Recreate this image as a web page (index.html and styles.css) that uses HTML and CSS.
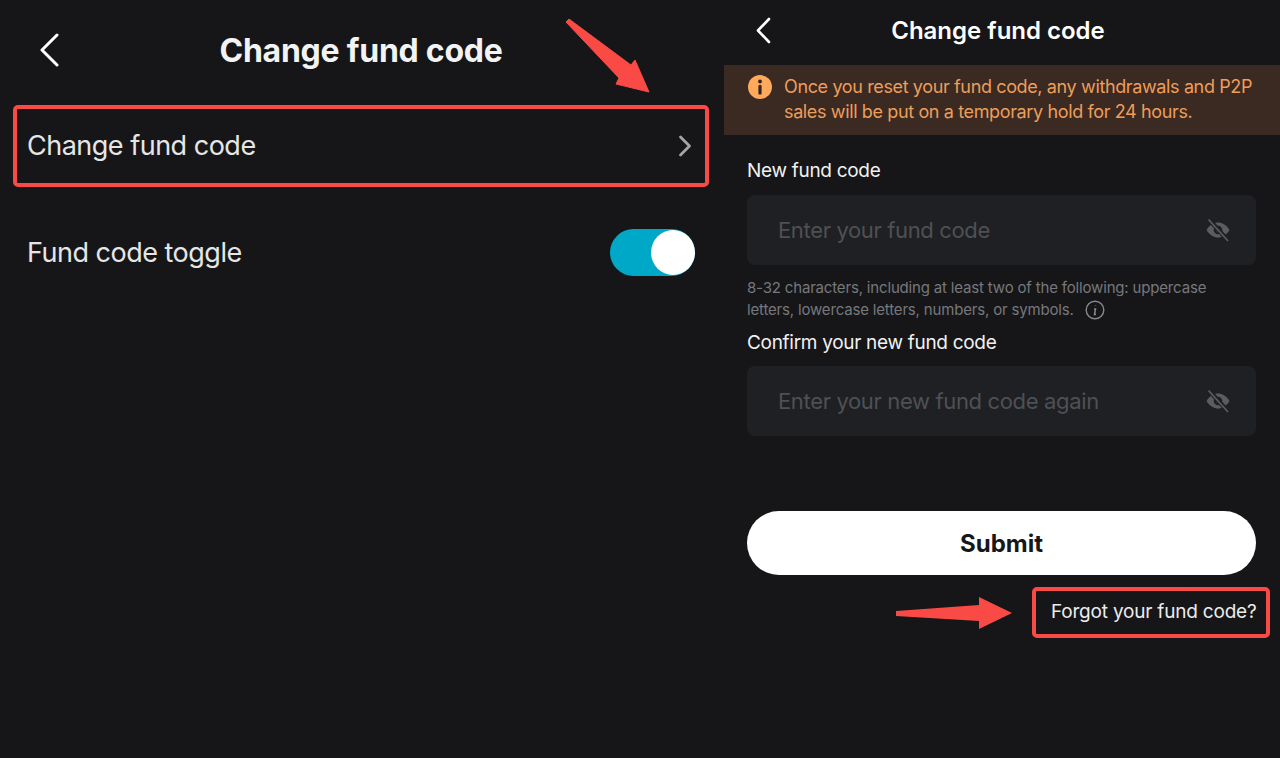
FILE: index.html
```html
<!DOCTYPE html>
<html lang="en">
<head>
  <meta charset="UTF-8"/>
  <meta name="viewport" content="width=device-width,initial-scale=1.0"/>
  <title>Change fund code</title>
  <link rel="stylesheet" href="styles.css">
</head>
<body>
  <!-- Left phone: settings list -->
  <section class="panel panel-left">
    <header class="top-left">
      <svg class="back-left" width="20" height="34" viewBox="0 0 20 34"><path d="M18 2 3 17l15 15" fill="none" stroke="#fff" stroke-width="3" stroke-linecap="round" stroke-linejoin="round"/></svg>
      <h1>Change fund code</h1>
    </header>

    <div class="row row-marked">
      <span>Change fund code</span>
      <svg width="14" height="22" viewBox="0 0 14 22"><path d="M2.500 2 11.500 11l-9 9" fill="none" stroke="#a3a4a6" stroke-width="2.800" stroke-linecap="round" stroke-linejoin="round"/></svg>
    </div>

    <div class="row row-toggle">
      <span>Fund code toggle</span>
      <div class="toggle"><div class="knob"></div></div>
    </div>

    <svg class="arrow arrow-one" width="100" height="90" viewBox="0 0 100 90"><path d="M6 12 9 9 71 55 75 50 89 82 56 74 59 68Z" fill="#f94a46" stroke="#f94a46" stroke-linejoin="round"/></svg>
  </section>

  <!-- Right phone: the form -->
  <section class="panel panel-right">
    <header class="top-right">
      <svg class="back-right" width="16" height="27" viewBox="0 0 16 27"><path d="M14 2 3 13.500 14 25" fill="none" stroke="#fff" stroke-width="2.600" stroke-linecap="round" stroke-linejoin="round"/></svg>
      <h2>Change fund code</h2>
    </header>

    <div class="notice">
      <svg class="notice-icon" width="24" height="24" viewBox="0 0 24 24"><circle cx="12" cy="12" r="12" fill="#ffa95c"/><rect x="10.400" y="10" width="3.200" height="9.500" rx="1" fill="#33261f"/><circle cx="12" cy="6.500" r="1.900" fill="#33261f"/></svg>
      <p>Once you reset your fund code, any withdrawals and P2P sales will be put on a temporary hold for 24 hours.</p>
    </div>

    <form class="form">
      <label class="label label-first">New fund code</label>
      <div class="field">
        <span>Enter your fund code</span>
        <svg class="eye" width="26" height="26" viewBox="0 0 26 26"><path d="M1.500 13C5 7.500 9 5.500 13 5.500S21 7.500 24.500 13C21 18.500 17 20.500 13 20.500S5 18.500 1.500 13Z" fill="#5b5c5f"/><circle cx="13" cy="13" r="4.300" fill="#1e2024"/><circle cx="13" cy="13" r="2" fill="#5b5c5f"/><path d="M4 2.500 23 23.500" stroke="#1e2024" stroke-width="4.500"/><path d="M3.500 2.500 23 24" stroke="#5b5c5f" stroke-width="1.800"/></svg>
      </div>
      <p class="hint">8-32 characters, including at least two of the following: uppercase letters, lowercase letters, numbers, or symbols.
        <svg class="hint-icon" width="20" height="20" viewBox="0 0 20 20"><circle cx="10" cy="10" r="8.800" fill="none" stroke="#88898b" stroke-width="1.400"/><path d="M10.500 5.500v.6M9 9h1.500l-1 5.500H11" fill="none" stroke="#88898b" stroke-width="1.500"/></svg>
      </p>
      <label class="label">Confirm your new fund code</label>
      <div class="field">
        <span>Enter your new fund code again</span>
        <svg class="eye" width="26" height="26" viewBox="0 0 26 26"><path d="M1.500 13C5 7.500 9 5.500 13 5.500S21 7.500 24.500 13C21 18.500 17 20.500 13 20.500S5 18.500 1.500 13Z" fill="#5b5c5f"/><circle cx="13" cy="13" r="4.300" fill="#1e2024"/><circle cx="13" cy="13" r="2" fill="#5b5c5f"/><path d="M4 2.500 23 23.500" stroke="#1e2024" stroke-width="4.500"/><path d="M3.500 2.500 23 24" stroke="#5b5c5f" stroke-width="1.800"/></svg>
      </div>
      <button class="submit" type="button">Submit</button>
      <div class="forgot-line">
        <a class="forgot">Forgot your fund code?</a>
      </div>
    </form>

    <svg class="arrow arrow-two" width="118" height="34" viewBox="0 0 118 34"><path d="M1 15 84 9 84 1 117 17 84 33 84 25 1 20Z" fill="#f94a46"/></svg>
  </section>
</body>
</html>
```

FILE: styles.css
```css
* { box-sizing:border-box; margin:0; padding:0; }
body {
  width:1280px; height:758px; overflow:hidden;
  display:flex;
  background:#161619; color:#fff;
  font-family:Inter,"Liberation Sans",sans-serif;
}
.panel { position:relative; height:100%; }
.panel-left { width:724px; }
.panel-right { width:556px; }

/* left */
.top-left {
  height:105px; padding:0 2px 5px 0;
  display:flex; align-items:center; justify-content:center;
  position:relative;
}
.top-left h1 { font-size:32px; font-weight:700; letter-spacing:-.25px; color:#f3f3f3; }
.back-left { position:absolute; left:39px; top:33px; }
.row {
  display:flex; align-items:center; justify-content:space-between;
  font-size:27px; letter-spacing:-.5px; color:#e6e6e6;
}
.row-marked {
  height:82px; margin:0 15px 0 13px; padding:0 13px 2px 10px;
  border:4px solid #f94a46; border-radius:5px;
}
.row-marked svg { margin-top:2px; }
.row-toggle { margin-top:42px; padding:0 29px 0 27px; }
.toggle {
  width:85px; height:47px; border-radius:24px; background:#00a8c8;
  display:flex; justify-content:flex-end; align-items:center;
}
.knob { width:44px; height:45px; border-radius:50%; background:#fff; }
.arrow { position:absolute; }
.arrow-one { left:560px; top:10px; }

/* right */
.top-right {
  height:65px; padding-bottom:4px;
  display:flex; align-items:center; justify-content:center;
  position:relative;
}
.top-right h2 { font-size:24px; font-weight:600; margin-left:-8px; }
.back-right { position:absolute; left:31px; top:17px; }
.notice {
  height:70px; padding:9px 20px 0 24px;
  display:flex; gap:12px;
  background:#3a2a22; color:#ee9d5a;
  font-size:18px; line-height:25px; letter-spacing:-.37px;
}
.notice-icon { flex:none; margin-top:1px; }
.form { padding:0 24px 0 23px; display:flex; flex-direction:column; }
.label { font-size:19px; line-height:24px; letter-spacing:-.3px; color:#f1f1f1; margin-top:10px; }
.label-first { margin-top:24px; margin-bottom:1px; }
.field {
  height:70px; margin-top:11px; padding:0 25px 0 31px;
  display:flex; align-items:center; justify-content:space-between;
  background:#1e2024; border-radius:8px;
  font-size:22px; letter-spacing:-.35px; color:#4f5053;
}
.hint { margin-top:12px; font-size:15px; line-height:22px; letter-spacing:-.17px; color:#77787b; }
.hint-icon { vertical-align:-5px; margin-left:7px; }
.submit {
  height:64px; margin-top:75px; border:none; border-radius:32px;
  background:#fff; color:#16171a;
  font-family:inherit; font-size:24px; font-weight:700;
}
.forgot-line { display:flex; justify-content:flex-end; margin-top:12px; margin-right:-14px; }
.forgot {
  width:238px; height:51px; padding:0 0 2px 15px;
  display:flex; align-items:center; white-space:nowrap;
  border:4px solid #f94a46; border-radius:5px;
  font-size:19px; letter-spacing:-.2px; color:#ececec;
}
.arrow-two { left:171px; top:596px; }
```
